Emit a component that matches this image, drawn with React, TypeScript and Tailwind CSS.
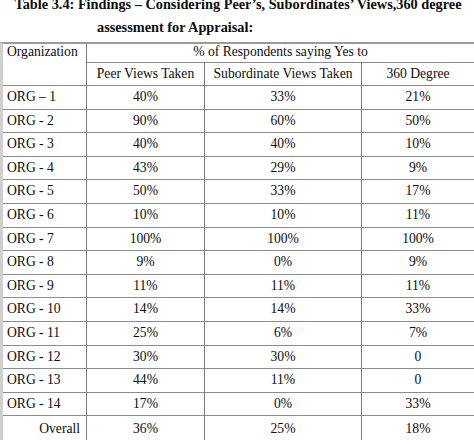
const rows: [string, string, string, string][] = [
  ["ORG – 1", "40%", "33%", "21%"],
  ["ORG - 2", "90%", "60%", "50%"],
  ["ORG - 3", "40%", "40%", "10%"],
  ["ORG - 4", "43%", "29%", "9%"],
  ["ORG - 5", "50%", "33%", "17%"],
  ["ORG - 6", "10%", "10%", "11%"],
  ["ORG - 7", "100%", "100%", "100%"],
  ["ORG - 8", "9%", "0%", "9%"],
  ["ORG - 9", "11%", "11%", "11%"],
  ["ORG - 10", "14%", "14%", "33%"],
  ["ORG - 11", "25%", "6%", "7%"],
  ["ORG - 12", "30%", "30%", "0"],
  ["ORG - 13", "44%", "11%", "0"],
  ["ORG - 14", "17%", "0%", "33%"],
];

const serif = "font-['Liberation_Serif','Times_New_Roman',serif]";

export default function App() {
  return (
    <div className={`w-[474px] h-[440px] overflow-hidden bg-white text-[#0d0d0d] ${serif}`}>
      <div className="-mt-[7px] font-bold text-[14.3px] leading-[23px]">
        <p className="text-center whitespace-nowrap pl-[2px]">
          Table 3.4: Findings – Considering Peer’s, Subordinates’ Views,360 degree
        </p>
        <p className="pl-[97px]">assessment for Appraisal:</p>
      </div>

      <div className="mt-[3px] w-[474px] text-[13.6px] border-t-2 border-t-[#9a9a9a] border-l-[3px] border-l-[#cfcfcf]">
        <div className="grid grid-cols-[84px_118px_157px_112px]">
          <div className="row-span-2 border-r border-r-[#7c7c7c] border-b border-b-[#8c8c8c] pl-[4px] leading-[15px]">
            Organization
          </div>
          <div className="col-span-3 h-[19px] border-b border-b-[#8c8c8c] text-center leading-[16px]">
            % of Respondents saying Yes to
          </div>
          <div className="h-[23px] border-b border-b-[#8c8c8c] border-r border-r-[#7c7c7c] text-center leading-[22px]">
            Peer Views Taken
          </div>
          <div className="h-[23px] border-b border-b-[#8c8c8c] border-r border-r-[#7c7c7c] text-center leading-[22px]">
            Subordinate Views Taken
          </div>
          <div className="h-[23px] border-b border-b-[#8c8c8c] text-center leading-[22px]">
            360 Degree
          </div>

          {rows.map((r) => (
            <div key={r[0]} className="contents">
              <div className="h-[23.6px] border-b border-b-[#8c8c8c] border-r border-r-[#7c7c7c] pl-[4px] flex items-center">
                {r[0]}
              </div>
              <div className="h-[23.6px] border-b border-b-[#8c8c8c] border-r border-r-[#7c7c7c] flex items-center justify-center">
                {r[1]}
              </div>
              <div className="h-[23.6px] border-b border-b-[#8c8c8c] border-r border-r-[#7c7c7c] flex items-center justify-center">
                {r[2]}
              </div>
              <div className="h-[23.6px] border-b border-b-[#8c8c8c] flex items-center justify-center">
                {r[3]}
              </div>
            </div>
          ))}

          <div className="h-[30px] border-r border-r-[#7c7c7c] pr-[6px] pt-[3px] text-right">Overall</div>
          <div className="h-[30px] border-r border-r-[#7c7c7c] pt-[3px] text-center">36%</div>
          <div className="h-[30px] border-r border-r-[#7c7c7c] pt-[3px] text-center">25%</div>
          <div className="h-[30px] pt-[3px] text-center">18%</div>
        </div>
      </div>
    </div>
  );
}
